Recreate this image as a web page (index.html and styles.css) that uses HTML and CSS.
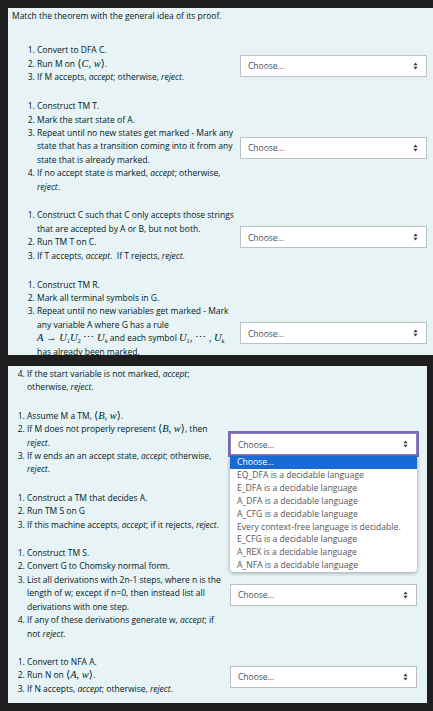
FILE: index.html
```html
<!DOCTYPE html>
<html lang="en">
<head>
    <meta charset="UTF-8">
    <meta name="viewport" content="width=device-width, initial-scale=1.0">
    <title>Match question</title>
    <link rel="stylesheet" href="styles.css">
</head>
<body>
    <div class="panel panel-top">
        <p class="question">Match the theorem with the general idea of its proof.</p>

        <div class="rows">
            <div class="row">
                <ol class="steps">
                    <li>Convert to DFA C.</li>
                    <li>Run M on <span class="math">⟨<i>C</i>, <i>w</i>⟩</span>.</li>
                    <li>If M accepts, <em>accept</em>; otherwise, <em>reject</em>.</li>
                </ol>
                <div class="select"><span>Choose...</span><svg class="arrows" width="5" height="8" viewBox="0 0 5 8"><path d="M0.4 3.3 L2.5 0.6 L4.6 3.3Z M0.4 4.7 L2.5 7.4 L4.6 4.7Z"/></svg></div>
            </div>

            <div class="row">
                <ol class="steps">
                    <li>Construct TM T.</li>
                    <li>Mark the start state of A.</li>
                    <li>Repeat until no new states get marked - Mark any state that has a transition coming into it from any state that is already marked.</li>
                    <li>If no accept state is marked, <em>accept</em>; otherwise, <em>reject</em>.</li>
                </ol>
                <div class="select"><span>Choose...</span><svg class="arrows" width="5" height="8" viewBox="0 0 5 8"><path d="M0.4 3.3 L2.5 0.6 L4.6 3.3Z M0.4 4.7 L2.5 7.4 L4.6 4.7Z"/></svg></div>
            </div>

            <div class="row">
                <ol class="steps">
                    <li>Construct C such that C only accepts those strings that are accepted by A or B, but not both.</li>
                    <li>Run TM T on C.</li>
                    <li>If T accepts, <em>accept</em>.&nbsp; If T rejects, <em>reject</em>.</li>
                </ol>
                <div class="select"><span>Choose...</span><svg class="arrows" width="5" height="8" viewBox="0 0 5 8"><path d="M0.4 3.3 L2.5 0.6 L4.6 3.3Z M0.4 4.7 L2.5 7.4 L4.6 4.7Z"/></svg></div>
            </div>

            <div class="row">
                <ol class="steps">
                    <li>Construct TM R.</li>
                    <li>Mark all terminal symbols in G.</li>
                    <li>Repeat until no new variables get marked - Mark any variable A where G has a rule <span class="math"><i>A</i> → <i>U</i><sub>1</sub><i>U</i><sub>2</sub> ⋯ <i>U</i><sub><i>k</i></sub></span> and each symbol <span class="math"><i>U</i><sub>1</sub>, ⋯ , <i>U</i><sub><i>k</i></sub></span> has already been marked.</li>
                    <li>If the start variable is not marked, <em>accept</em>; otherwise, <em>reject</em>.</li>
                </ol>
                <div class="select"><span>Choose...</span><svg class="arrows" width="5" height="8" viewBox="0 0 5 8"><path d="M0.4 3.3 L2.5 0.6 L4.6 3.3Z M0.4 4.7 L2.5 7.4 L4.6 4.7Z"/></svg></div>
            </div>
        </div>
    </div>

    <div class="panel panel-bottom">
        <div class="rows">
            <div class="row">
                <ol class="steps" start="4">
                    <li>If the start variable is not marked, <em>accept</em>; otherwise, <em>reject</em>.</li>
                </ol>
            </div>

            <div class="row row-open">
                <ol class="steps">
                    <li>Assume M a TM, <span class="math">⟨<i>B</i>, <i>w</i>⟩</span>.</li>
                    <li>If M does not properly represent <span class="math">⟨<i>B</i>, <i>w</i>⟩</span>, then <em>reject</em>.</li>
                    <li>If w ends an an accept state, <em>accept</em>; otherwise, <em>reject</em>.</li>
                </ol>
                <div class="select focused"><span>Choose...</span><svg class="arrows" width="5" height="8" viewBox="0 0 5 8"><path d="M0.4 3.3 L2.5 0.6 L4.6 3.3Z M0.4 4.7 L2.5 7.4 L4.6 4.7Z"/></svg>
                    <ul class="dropdown">
                        <li class="active">Choose...</li>
                        <li>EQ_DFA is a decidable language</li>
                        <li>E_DFA is a decidable language</li>
                        <li>A_DFA is a decidable language</li>
                        <li>A_CFG is a decidable language</li>
                        <li>Every context-free language is decidable.</li>
                        <li>E_CFG is a decidable language</li>
                        <li>A_REX is a decidable language</li>
                        <li>A_NFA is a decidable language</li>
                    </ul>
                </div>
            </div>

            <div class="row">
                <ol class="steps">
                    <li>Construct a TM that decides A.</li>
                    <li>Run TM S on G</li>
                    <li>If this machine accepts, <em>accept</em>; if it rejects, <em>reject</em>.</li>
                </ol>
                <div class="select"><span>Choose...</span><svg class="arrows" width="5" height="8" viewBox="0 0 5 8"><path d="M0.4 3.3 L2.5 0.6 L4.6 3.3Z M0.4 4.7 L2.5 7.4 L4.6 4.7Z"/></svg></div>
            </div>

            <div class="row">
                <ol class="steps">
                    <li>Construct TM S.</li>
                    <li>Convert G to Chomsky normal form.</li>
                    <li>List all derivations with 2n-1 steps, where n is the length of w; except if n=0, then instead list all derivations with one step.</li>
                    <li>If any of these derivations generate w, <em>accept</em>; if not <em>reject</em>.</li>
                </ol>
                <div class="select"><span>Choose...</span><svg class="arrows" width="5" height="8" viewBox="0 0 5 8"><path d="M0.4 3.3 L2.5 0.6 L4.6 3.3Z M0.4 4.7 L2.5 7.4 L4.6 4.7Z"/></svg></div>
            </div>

            <div class="row">
                <ol class="steps">
                    <li>Convert to NFA A.</li>
                    <li>Run N on <span class="math">⟨<i>A</i>, <i>w</i>⟩</span>.</li>
                    <li>If N accepts, <em>accept</em>; otherwise, <em>reject</em>.</li>
                </ol>
                <div class="select"><span>Choose...</span><svg class="arrows" width="5" height="8" viewBox="0 0 5 8"><path d="M0.4 3.3 L2.5 0.6 L4.6 3.3Z M0.4 4.7 L2.5 7.4 L4.6 4.7Z"/></svg></div>
            </div>
        </div>
    </div>
</body>
</html>
```

FILE: styles.css
```css
* {
    margin: 0;
    padding: 0;
    box-sizing: border-box;
}

html,
body {
    overflow: hidden;
}

body {
    width: 433px;
    height: 711px;
    padding: 8px 0 0 8px;
    background-color: #1e1e1e;
    color: #001a1e;
    font-family: "Open Sans", "Noto Sans", sans-serif;
    font-size: 8.5px;
    line-height: 13.4px;
}

/* the two cropped views of the question */
.panel {
    background-color: #e7f3f5;
    overflow: hidden;
}

.panel-top {
    width: 429px;
    height: 347px;
    padding: 1px 10px 0 4px;
}

.panel-bottom {
    width: 419px;
    height: 337px;
    margin-top: 11px;
    padding-top: 1px;
}

.question {
    margin-bottom: 21px;
}

.rows {
    display: flex;
    flex-direction: column;
    gap: 11.5px;
}

.panel-bottom .rows {
    gap: 11px;
}

.row {
    display: grid;
    grid-template-columns: 223px 187px;
    column-gap: 5px;
    align-items: center;
}

.panel-bottom .row {
    grid-template-columns: 217px 187px;
}

.steps {
    padding-left: 25px;
    padding-bottom: 4px;
}

.panel-bottom .steps {
    padding-left: 19px;
}

.steps em {
    font-style: italic;
}

.math {
    white-space: nowrap;
    font-family: "Liberation Serif", "DejaVu Serif", serif;
    font-size: 10.5px;
    line-height: 0;
}

.math sub {
    font-size: 6.5px;
    line-height: 0;
    vertical-align: -2px;
}

/* select boxes */
.select {
    position: relative;
    height: 22px;
    display: flex;
    align-items: center;
    justify-content: space-between;
    padding: 0 8px 0 7px;
    background-color: #fff;
    border: 1px solid #bcc1c6;
    color: #495057;
}

.arrows {
    fill: #343a40;
}

.select.focused {
    border-color: #8f80c0;
    box-shadow: 0 0 0 2px #7a68b2;
}

.row-open {
    z-index: 2;
}

.dropdown {
    position: absolute;
    top: 100%;
    left: -1px;
    right: -1px;
    margin-top: 2px;
    list-style: none;
    background-color: #fff;
    border-radius: 0 0 4px 4px;
    box-shadow: 0 1px 4px rgba(0, 0, 0, 0.35);
    overflow: hidden;
}

.dropdown li {
    padding-left: 7px;
    line-height: 12.85px;
    font-size: 8.65px;
    color: #555;
    white-space: nowrap;
}

.dropdown li.active {
    background-color: #1a6ad6;
    color: #fff;
}
```
